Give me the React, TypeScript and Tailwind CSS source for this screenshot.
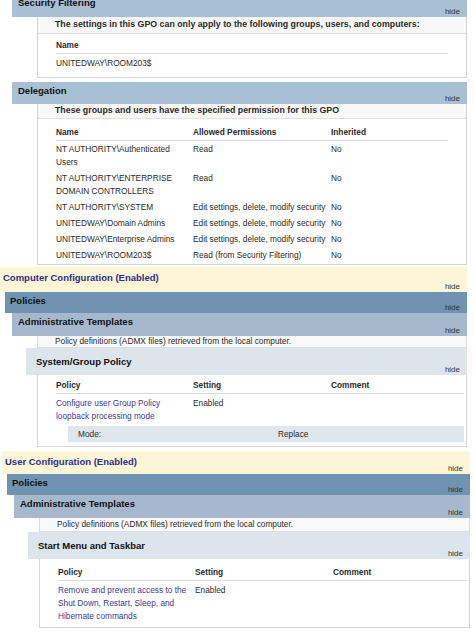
import type { ReactNode } from "react";

const font = "font-['Liberation_Sans','Arial',sans-serif]";

function Bar({
  title,
  bg,
  titleClass = "left-[6px] top-[3px] text-[#111]",
  height,
}: {
  title: string;
  bg: string;
  titleClass?: string;
  height: string;
}) {
  return (
    <div className={`relative ${height} ${bg}`}>
      <div className={`absolute text-[9.5px] font-bold leading-[12px] ${titleClass}`}>{title}</div>
      <div className="absolute bottom-[0px] right-[7px] text-[8px] leading-[10px] text-[#333]">hide</div>
    </div>
  );
}

function Th({ children, w }: { children: ReactNode; w: string }) {
  return <div className={`${w} shrink-0 font-bold`}>{children}</div>;
}

function PolicyTable({
  rows,
  mode,
  headH,
}: {
  rows: { name: string[]; setting: string }[];
  mode?: boolean;
  headH: string;
}) {
  return (
    <div className="border border-t-0 border-[#d6d6d6] bg-white pb-[4px] pl-[18px] pr-[2px]">
      <div className={`flex ${headH} items-end border-b border-[#dcdcdc] pb-[2px] leading-[12px]`}>
        <Th w="w-[137px]">Policy</Th>
        <Th w="w-[138px]">Setting</Th>
        <Th w="w-[100px]">Comment</Th>
      </div>
      {rows.map((r, i) => (
        <div key={i} className="flex pt-[3px] leading-[13px]">
          <div className="w-[137px] shrink-0 text-[#3b3b98]">
            {r.name.map((n, j) => (
              <div key={j} className="whitespace-nowrap">
                {n}
              </div>
            ))}
          </div>
          <div className="w-[138px] shrink-0">{r.setting}</div>
        </div>
      ))}
      {mode && (
        <div className="ml-[12px] mt-[3px] flex h-[16px] items-center bg-[#dfe6ec] pl-[10px]">
          <div className="w-[200px]">Mode:</div>
          <div>Replace</div>
        </div>
      )}
    </div>
  );
}

function ConfigSection({
  title,
  sub,
  rows,
  mode,
  yellowH,
  pdH,
  headH,
}: {
  title: string;
  sub: string;
  rows: { name: string[]; setting: string }[];
  mode?: boolean;
  yellowH: string;
  pdH: string;
  headH: string;
}) {
  return (
    <div>
      <Bar title={title} bg="bg-[#fcf5d7]" titleClass="left-[3px] top-[5px] text-[#2e2e8a]" height={yellowH} />
      <div className="ml-[5px]">
        <Bar title="Policies" bg="bg-[#6f93b1]" titleClass="left-[5px] top-[3px] text-[#111]" height="h-[21px]" />
        <div className="ml-[7px]">
          <Bar
            title="Administrative Templates"
            bg="bg-[#a6b9cc]"
            titleClass="left-[6px] top-[3px] text-[#111]"
            height="h-[23px]"
          />
          <div className={`ml-[25px] flex ${pdH} items-center border-x border-b border-[#dcdcdc] bg-[#f9f9f9] pl-[17px] leading-[11px]`}>
            Policy definitions (ADMX files) retrieved from the local computer.
          </div>
          <div className="ml-[14px]">
            <Bar title={sub} bg="bg-[#dce5ec]" titleClass="left-[10px] top-[8px] text-[#111]" height="h-[27px]" />
            <div className="ml-[11px]">
              <PolicyTable rows={rows} mode={mode} headH={headH} />
            </div>
          </div>
        </div>
      </div>
    </div>
  );
}

export default function App() {
  const delegation = [
    { name: ["NT AUTHORITY\\Authenticated", "Users"], perm: "Read", inh: "No" },
    { name: ["NT AUTHORITY\\ENTERPRISE", "DOMAIN CONTROLLERS"], perm: "Read", inh: "No" },
    { name: ["NT AUTHORITY\\SYSTEM"], perm: "Edit settings, delete, modify security", inh: "No" },
    { name: ["UNITEDWAY\\Domain Admins"], perm: "Edit settings, delete, modify security", inh: "No" },
    { name: ["UNITEDWAY\\Enterprise Admins"], perm: "Edit settings, delete, modify security", inh: "No" },
    { name: ["UNITEDWAY\\ROOM203$"], perm: "Read (from Security Filtering)", inh: "No" },
  ];

  return (
    <div className={`h-[635px] w-[474px] overflow-hidden bg-white text-[8.3px] text-[#2a2a2a] ${font}`}>
      {/* security filtering */}
      <div className="mr-[7px] ml-[12px]">
        <div className="-mt-[5px]">
          <Bar title="Security Filtering" bg="bg-[#a9bfd4]" titleClass="left-[6px] top-[2px] text-[#111]" height="h-[22px]" />
        </div>
        <div className="ml-[25px] border border-t-0 border-[#d4d4d4] bg-white">
          <div className="flex h-[17px] items-center whitespace-nowrap border-b border-[#e0e0e0] bg-[#f8f8f8] pl-[17px] text-[8.8px] font-bold">
            The settings in this GPO can only apply to the following groups, users, and computers:
          </div>
          <div className="px-[18px] pb-[7px]">
            <div className="flex h-[20px] items-end border-b border-[#dcdcdc] pb-[2px] font-bold leading-[12px]">Name</div>
            <div className="pt-[3px] leading-[13px]">UNITEDWAY\ROOM203$</div>
          </div>
        </div>
      </div>

      {/* delegation */}
      <div className="mr-[7px] ml-[12px] mt-[4px]">
        <Bar title="Delegation" bg="bg-[#a9bfd4]" titleClass="left-[6px] top-[3px] text-[#111]" height="h-[22px]" />
        <div className="ml-[25px] border border-t-0 border-[#d4d4d4] bg-white">
          <div className="flex h-[15px] items-center whitespace-nowrap border-b border-[#e0e0e0] bg-[#f8f8f8] pl-[17px] text-[8.8px] font-bold">
            These groups and users have the specified permission for this GPO
          </div>
          <div className="px-[18px] pb-[1px]">
            <div className="flex h-[22px] items-end border-b border-[#dcdcdc] pb-[2px] font-bold leading-[12px]">
              <div className="w-[137px] shrink-0">Name</div>
              <div className="w-[138px] shrink-0">Allowed Permissions</div>
              <div>Inherited</div>
            </div>
            {delegation.map((d, i) => (
              <div key={i} className="flex pb-[1px] pt-[2px] leading-[13px]">
                <div className="w-[137px] shrink-0">
                  {d.name.map((n, j) => (
                    <div key={j} className="whitespace-nowrap">
                      {n}
                    </div>
                  ))}
                </div>
                <div className="w-[138px] shrink-0 whitespace-nowrap">{d.perm}</div>
                <div>{d.inh}</div>
              </div>
            ))}
          </div>
        </div>
      </div>

      {/* computer configuration */}
      <div className="mr-[7px] mt-[2px]">
        <ConfigSection
          title="Computer Configuration (Enabled)"
          sub="System/Group Policy"
          rows={[{ name: ["Configure user Group Policy", "loopback processing mode"], setting: "Enabled" }]}
          mode
          yellowH="h-[25px]"
          pdH="h-[12px]"
          headH="h-[19px]"
        />
      </div>

      {/* user configuration */}
      <div className="mr-[4px] ml-[2px] mt-[4px]">
        <ConfigSection
          title="User Configuration (Enabled)"
          sub="Start Menu and Taskbar"
          rows={[
            {
              name: ["Remove and prevent access to the", "Shut Down, Restart, Sleep, and", "Hibernate commands"],
              setting: "Enabled",
            },
          ]}
          yellowH="h-[23px]"
          pdH="h-[14px]"
          headH="h-[22px]"
        />
      </div>
    </div>
  );
}
